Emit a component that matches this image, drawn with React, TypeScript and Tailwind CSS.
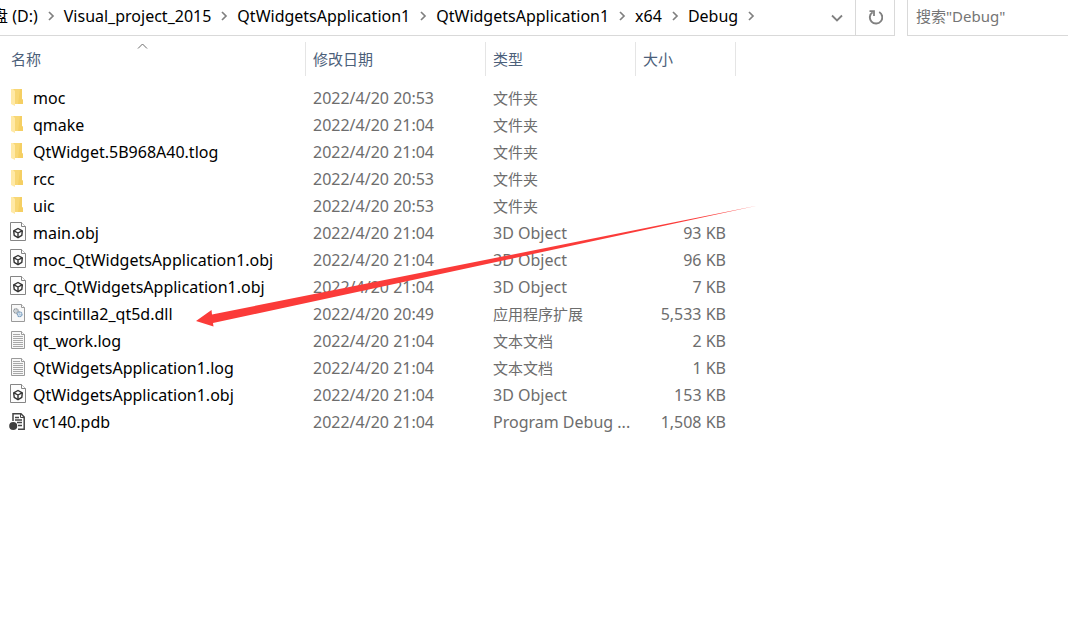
import { ReactNode } from "react";

type Kind = "folder" | "object" | "library" | "log" | "pdb";

type Entry = {
  name: string;
  date: string;
  type: string;
  size?: string;
  kind: Kind;
};

const crumbs = [
  "盘 (D:)",
  "Visual_project_2015",
  "QtWidgetsApplication1",
  "QtWidgetsApplication1",
  "x64",
  "Debug",
];

const entries: Entry[] = [
  { name: "moc", date: "2022/4/20 20:53", type: "文件夹", kind: "folder" },
  { name: "qmake", date: "2022/4/20 21:04", type: "文件夹", kind: "folder" },
  { name: "QtWidget.5B968A40.tlog", date: "2022/4/20 21:04", type: "文件夹", kind: "folder" },
  { name: "rcc", date: "2022/4/20 20:53", type: "文件夹", kind: "folder" },
  { name: "uic", date: "2022/4/20 20:53", type: "文件夹", kind: "folder" },
  { name: "main.obj", date: "2022/4/20 21:04", type: "3D Object", size: "93 KB", kind: "object" },
  { name: "moc_QtWidgetsApplication1.obj", date: "2022/4/20 21:04", type: "3D Object", size: "96 KB", kind: "object" },
  { name: "qrc_QtWidgetsApplication1.obj", date: "2022/4/20 21:04", type: "3D Object", size: "7 KB", kind: "object" },
  { name: "qscintilla2_qt5d.dll", date: "2022/4/20 20:49", type: "应用程序扩展", size: "5,533 KB", kind: "library" },
  { name: "qt_work.log", date: "2022/4/20 21:04", type: "文本文档", size: "2 KB", kind: "log" },
  { name: "QtWidgetsApplication1.log", date: "2022/4/20 21:04", type: "文本文档", size: "1 KB", kind: "log" },
  { name: "QtWidgetsApplication1.obj", date: "2022/4/20 21:04", type: "3D Object", size: "153 KB", kind: "object" },
  { name: "vc140.pdb", date: "2022/4/20 21:04", type: "Program Debug ...", size: "1,508 KB", kind: "pdb" },
];

// Han glyphs fill the whole em, so they are set one pixel smaller than Latin
const isHan = (text: string) => /[\u4e00-\u9fff]/.test(text);

const SmallPage = ({ children }: { children?: ReactNode }) => (
  <>
    <path d="M2.5 1.5H12.5L15.5 4.5V18.5H2.5Z" fill="#f8f8f8" stroke="#9a9a9a" />
    <path d="M12.5 1.5V4.5H15.5" fill="#fff" stroke="#9a9a9a" />
    {children}
  </>
);

const icons: Record<Kind, ReactNode> = {
  folder: (
    <>
      <path d="M4 2H13V12L14 13V17H4Z" fill="#f8d775" />
      <path d="M11 2H13V12L14 13V17H9Z" fill="#f5cf63" />
      <path d="M2 2H4L6 4V19L2 17Z" fill="#ffe9a6" />
    </>
  ),
  object: (
    <>
      <path d="M1.5 .5H12.5L16.5 4.5V18.5H1.5Z" fill="#fdfdfd" stroke="#858585" />
      <path d="M12.5 .5V4.5H16.5" fill="#fff" stroke="#858585" />
      <g fill="none" stroke="#333" strokeWidth="1.4" strokeLinejoin="round">
        <path d="M9 6.5L13.3 8.8L12.8 13.4L9 15.7L5.2 13.4L4.7 8.8Z" />
        <path d="M5 8.9L9 11L13 8.9M9 11V15.5" />
      </g>
    </>
  ),
  library: (
    <SmallPage>
      <g fill="#eef4f8">
        <circle cx="7" cy="8" r="2.2" stroke="#8f9499" strokeWidth="1.3" strokeDasharray="1.5 .3" />
        <circle cx="7" cy="8" r=".6" stroke="#a7adb2" strokeWidth=".6" />
        <circle cx="10.7" cy="11.3" r="2.3" stroke="#7b9fc0" strokeWidth="1.3" strokeDasharray="1.5 .3" />
        <circle cx="10.7" cy="11.3" r=".6" stroke="#7b9fc0" strokeWidth=".6" />
      </g>
    </SmallPage>
  ),
  log: (
    <SmallPage>
      <path
        d="M4 4.5H11M4 6.5H14M4 8.5H14M4 10.5H14M4 12.5H14M4 14.5H14M4 16.5H14"
        stroke="#a8a8a8"
      />
    </SmallPage>
  ),
  pdb: (
    <>
      <path d="M4 10V2.8H12L15.2 6V18.2H9" fill="#fff" stroke="#444" strokeWidth="1.5" />
      <path d="M11.5 3V6.5H15" fill="none" stroke="#444" />
      <path d="M6 6.5H10M6 9H13M8 11.5H13M9 14.5H13" stroke="#444" strokeWidth="1.3" />
      <circle cx="4.2" cy="15" r="4" fill="#3f3f3f" />
    </>
  ),
};

const FileIcon = ({ kind }: { kind: Kind }) => (
  <svg className="h-[21px] w-[17px] shrink-0" viewBox="0 0 17 21" aria-hidden="true">
    {icons[kind]}
  </svg>
);

const Chevron = () => (
  <svg className="h-3 w-[26px] shrink-0" viewBox="0 0 26 12" aria-hidden="true">
    <path d="M11 2L15 6L11 10" fill="none" stroke="#808080" strokeWidth="1.7" />
  </svg>
);

const AddressBar = () => (
  <header className="flex h-9 items-stretch gap-3">
    <div className="flex min-w-0 flex-1 border-r border-b border-[#d9d9d9]">
      <nav className="-ml-2 flex min-w-0 flex-1 items-center overflow-hidden pb-1" aria-label="路径">
        {crumbs.map((crumb, i) => (
          <div key={i} className="flex shrink-0 items-center">
            <button type="button" className="whitespace-nowrap">
              {crumb}
            </button>
            <Chevron />
          </div>
        ))}
      </nav>
      <button type="button" aria-label="以前的位置" className="grid w-9 place-items-center">
        <svg className="h-3 w-3" viewBox="0 0 12 12" aria-hidden="true">
          <path d="M1 3.5L6 8.5L11 3.5" fill="none" stroke="#808080" strokeWidth="1.8" />
        </svg>
      </button>
      <button
        type="button"
        aria-label="刷新"
        className="grid w-[39px] place-items-center border-l border-[#d9d9d9] pb-0.5"
      >
        <svg className="h-4 w-4" viewBox="0 0 16 16" fill="none" stroke="#808080" aria-hidden="true">
          <path d="M12.2 3A6.2 6.2 0 1 1 5.6 3.2" strokeWidth="1.9" />
          <path d="M2.5 2.2H7V7" strokeWidth="1.8" />
        </svg>
      </button>
    </div>
    <input
      type="text"
      aria-label="搜索"
      placeholder={'搜索"Debug"'}
      className="w-[161px] border-b border-l border-[#d9d9d9] pb-1 pl-2 text-[15px] outline-none placeholder:text-[#757575]"
    />
  </header>
);

const Column = ({ label, sorted }: { label: string; sorted?: boolean }) => (
  <th
    className="relative h-[34px] border-r border-[#e5e5e5] p-0 text-left text-[15px] leading-5 font-normal text-[#4c607a]"
    aria-sort={sorted ? "ascending" : undefined}
  >
    <button type="button" className={sorted ? "w-full pl-[11px] text-left" : "w-full pl-[7px] text-left"}>
      {label}
    </button>
    {sorted && (
      <svg className="absolute top-0 left-[137px] h-2 w-3" viewBox="0 0 12 8" aria-hidden="true">
        <path d="M1 6.5L5.5 2L10 6.5" fill="none" stroke="#6d6d6d" />
      </svg>
    )}
  </th>
);

const FileTable = () => (
  <table className="w-[736px] table-fixed border-separate border-spacing-0">
    <colgroup>
      <col className="w-[306px]" />
      <col className="w-[180px]" />
      <col className="w-[150px]" />
      <col className="w-[100px]" />
    </colgroup>
    <thead>
      <tr>
        <Column label="名称" sorted />
        <Column label="修改日期" />
        <Column label="类型" />
        <Column label="大小" />
      </tr>
    </thead>
    <tbody className="text-[#6d6d6d] before:block before:h-2">
      {entries.map((entry) => (
        <tr key={entry.name} className="h-[27px]">
          <td className="p-0 pl-[9px] text-black">
            <div className="flex items-center gap-[7px]">
              <FileIcon kind={entry.kind} />
              {entry.name}
            </div>
          </td>
          <td className="p-0 pl-[7px]">{entry.date}</td>
          <td className={isHan(entry.type) ? "p-0 pl-[7px] text-[15px] leading-5" : "p-0 pl-[7px]"}>
            {entry.type}
          </td>
          <td className="p-0 pr-2.5 text-right">{entry.size}</td>
        </tr>
      ))}
    </tbody>
  </table>
);

const App = () => (
  <div className="min-h-screen overflow-hidden bg-white font-['Noto_Sans','Noto_Sans_CJK_SC',sans-serif] text-base leading-5 text-black">
    <AddressBar />
    <main className="relative pt-1.5">
      <FileTable />
      {/* pointer to the qscintilla dll */}
      <svg
        className="pointer-events-none absolute top-[169px] left-[194px] h-[124px] w-[564px]"
        viewBox="0 0 564 124"
        aria-hidden="true"
      >
        <path d="M2 116L17.5 105L18 109.5L564 .5L19 118L19.5 121.5Z" fill="#fb3b39" />
      </svg>
    </main>
  </div>
);

export default App;
